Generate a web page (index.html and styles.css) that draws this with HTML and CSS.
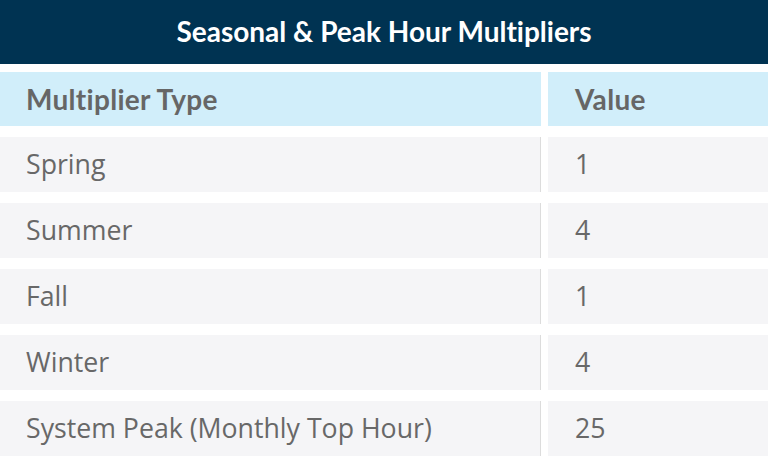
FILE: index.html
```html
<!DOCTYPE html>
<html>
<head>
<meta charset="utf-8">
<link rel="stylesheet" href="styles.css">
</head>
<body>
<div class="title">Seasonal &amp; Peak Hour Multipliers</div>
<div class="table">
  <div class="th th-left">Multiplier Type</div>
  <div class="th">Value</div>
  <div class="td td-left">Spring</div>
  <div class="td td-right">1</div>
  <div class="td td-left">Summer</div>
  <div class="td td-right">4</div>
  <div class="td td-left">Fall</div>
  <div class="td td-right">1</div>
  <div class="td td-left">Winter</div>
  <div class="td td-right">4</div>
  <div class="td td-left">System Peak (Monthly Top Hour)</div>
  <div class="td td-right">25</div>
</div>
</body>
</html>
```

FILE: styles.css
```css
html, body {
  margin: 0;
  padding: 0;
  background: #ffffff;
}
body {
  width: 768px;
  height: 457px;
  overflow: hidden;
  font-variant-ligatures: none;
}
.title {
  height: 64px;
  background: #003352;
  color: #ffffff;
  font-family: Lato, "Liberation Sans", sans-serif;
  font-weight: 700;
  font-size: 28px;
  display: flex;
  align-items: center;
  justify-content: center;
  padding-bottom: 2px;
  box-sizing: border-box;
}
.table {
  margin-top: 8px;
  display: grid;
  grid-template-columns: 541px 1fr;
  grid-template-rows: 54px repeat(5, 55px);
  column-gap: 7px;
  row-gap: 11px;
}
.th {
  background: #d1eefa;
  color: #666666;
  font-family: Lato, "Liberation Sans", sans-serif;
  font-weight: 700;
  font-size: 28px;
  letter-spacing: 0.3px;
  display: flex;
  align-items: center;
  padding-left: 27px;
}
.th-left {
  padding-left: 26px;
}
.td {
  background: #f5f5f7;
  color: #686868;
  font-family: "Open Sans", "Liberation Sans", sans-serif;
  font-size: 26.7px;
  display: flex;
  align-items: center;
  padding-bottom: 2px;
  box-sizing: border-box;
}
.td-left {
  padding-left: 26px;
  border-right: 1px solid #dcdcdc;
}
.td-right {
  padding-left: 27px;
}
```
